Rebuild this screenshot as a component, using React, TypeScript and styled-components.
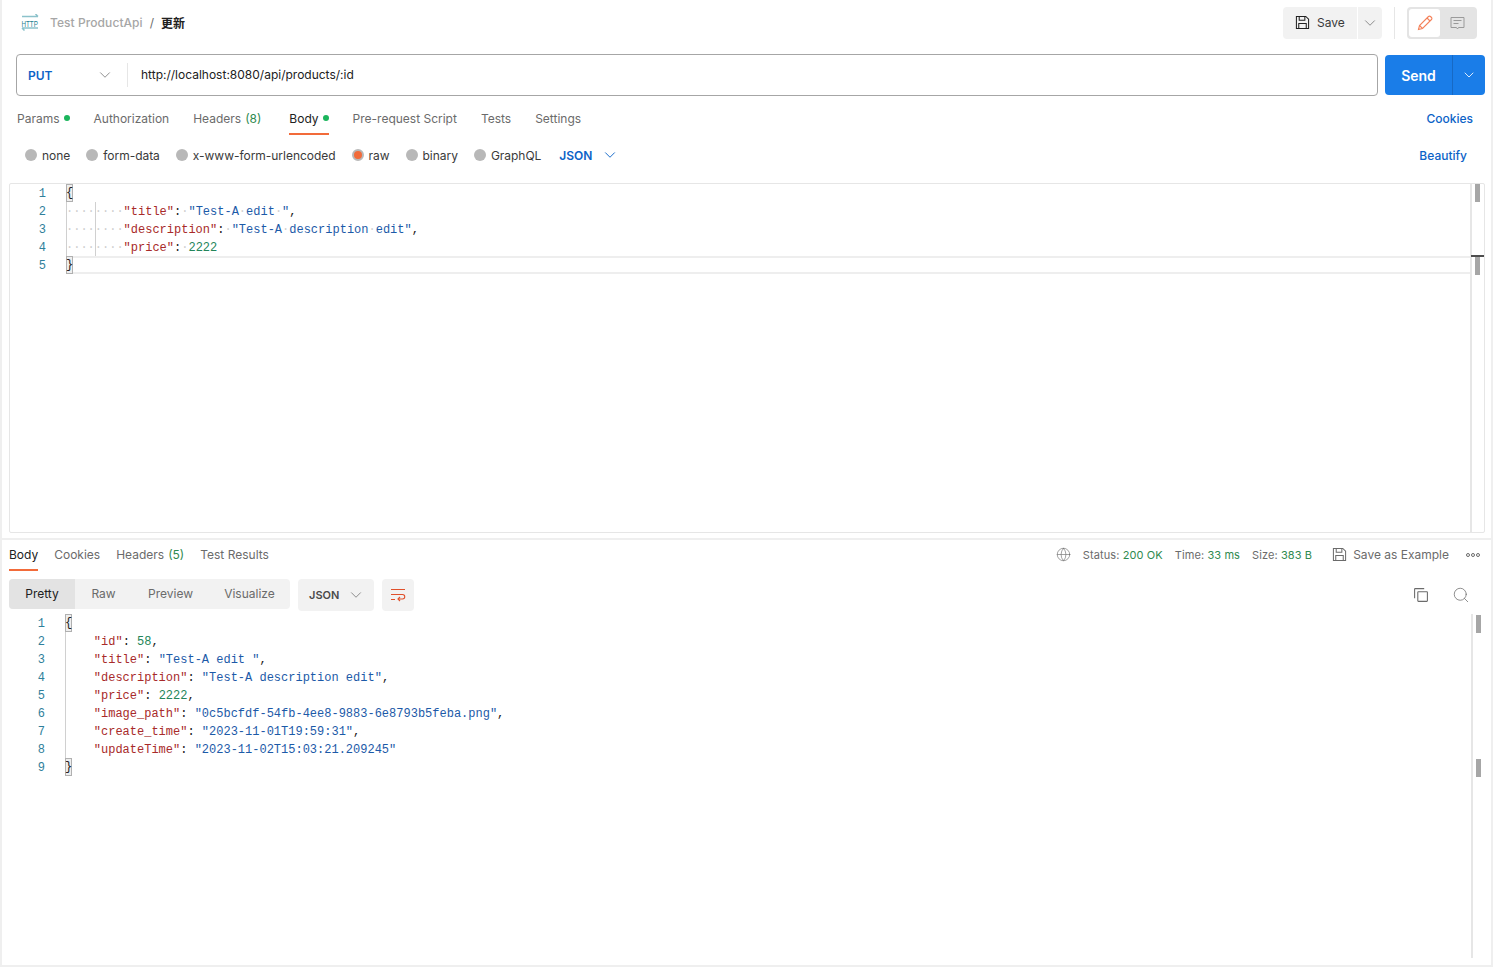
import styled, { createGlobalStyle } from 'styled-components'
import { ChevronDown, Globe, Search } from 'lucide-react'

const GlobalStyle = createGlobalStyle`
  html, body {
    margin: 0;
    padding: 0;
    background: #fff;
  }
  body {
    font-family: Inter, "Noto Sans CJK SC", "Liberation Sans", sans-serif;
    font-size: 12px;
    color: #212121;
  }
`

const Page = styled.div`
  width: 1493px;
  height: 967px;
  box-sizing: border-box;
  border-left: 2px solid #efefef;
  border-right: 2px solid #efefef;
  border-bottom: 2px solid #efefef;
  display: flex;
  flex-direction: column;
  overflow: hidden;
`

/* top bar */
const TopBar = styled.header`
  height: 46px;
  flex: none;
  padding: 7px 14px 0 19px;
  box-sizing: border-box;
  display: flex;
  align-items: flex-start;
`

const Crumbs = styled.div`
  display: flex;
  align-items: center;
  height: 30px;
  flex: 1;
`

const CrumbParent = styled.span`
  margin-left: 11px;
  color: #a6a6a6;
  font-weight: 500;
  letter-spacing: 0.07px;
`

const CrumbSlash = styled.span`
  margin: 0 7px;
  color: #6b6b6b;
`

const CrumbCurrent = styled.span`
  font-weight: 700;
  color: #212121;
`

const SaveGroup = styled.div`
  display: flex;
  gap: 1px;
`

const SaveButton = styled.div`
  width: 74px;
  height: 32px;
  padding: 0 0 2px 12px;
  display: flex;
  align-items: center;
  gap: 7px;
  box-sizing: border-box;
  background: #f2f2f2;
  border-radius: 4px 0 0 4px;
  color: #3a3a3a;
`

const SaveCaret = styled.div`
  width: 24px;
  height: 32px;
  display: flex;
  align-items: center;
  justify-content: center;
  background: #f2f2f2;
  border-radius: 0 4px 4px 0;
  color: #6b6b6b;
`

const TopDivider = styled.div`
  width: 1px;
  height: 32px;
  margin: 0 12px;
  background: #e6e6e6;
`

const ModeSwitch = styled.div`
  width: 70px;
  height: 32px;
  padding: 2px;
  box-sizing: border-box;
  display: flex;
  background: #e4e4e4;
  border-radius: 4px;
`

const ModeItem = styled.div<{ $active?: boolean }>`
  width: 32px;
  height: 28px;
  display: flex;
  align-items: center;
  justify-content: center;
  background: ${(p) => (p.$active ? '#fff' : 'transparent')};
  border-radius: 3px;
  margin-right: 2px;
`

/* url row */
const UrlRow = styled.div`
  flex: none;
  height: 42px;
  margin: 8px 6px 0 14px;
  display: flex;
  gap: 7px;
`

const UrlBox = styled.div`
  flex: 1;
  display: flex;
  align-items: center;
  border: 1px solid #a6a6a6;
  border-radius: 4px;
  box-sizing: border-box;
`

const MethodSelect = styled.div`
  width: 111px;
  height: 24px;
  padding: 0 13px 0 11px;
  box-sizing: border-box;
  display: flex;
  align-items: center;
  justify-content: space-between;
  border-right: 1px solid #e6e6e6;
  color: #0c63c7;
  font-weight: 600;
  font-size: 12px;
  svg {
    color: #6b6b6b;
  }
`

const UrlText = styled.div`
  padding: 0 0 2px 13px;
  font-size: 12px;
  color: #212121;
`

const SendButton = styled.div`
  width: 100px;
  height: 40px;
  margin-top: 1px;
  display: flex;
  background: #1a7de8;
  border-radius: 4px;
  color: #fff;
`

const SendLabel = styled.div`
  width: 67px;
  display: flex;
  align-items: center;
  justify-content: center;
  font-size: 14px;
  font-weight: 600;
  border-right: 1px solid #1769c4;
`

const SendCaret = styled.div`
  flex: 1;
  display: flex;
  align-items: center;
  justify-content: center;
`

/* tabs */
const TabRow = styled.nav`
  flex: none;
  height: 39px;
  padding-left: 15px;
  display: flex;
  gap: 24px;
`

const Tabs = styled.div`
  display: flex;
  gap: inherit;
  flex: 1;
`

const Tab = styled.div<{ $active?: boolean }>`
  display: flex;
  align-items: center;
  gap: 4px;
  height: 100%;
  box-sizing: border-box;
  color: ${(p) => (p.$active ? '#212121' : '#6b6b6b')};
  border-bottom: 2px solid ${(p) => (p.$active ? '#f26b3a' : 'transparent')};
`

const RequestTab = styled(Tab)`
  padding-top: 7px;
`

const TabDot = styled.span`
  width: 6px;
  height: 6px;
  border-radius: 50%;
  background: #1bb55c;
`

const Count = styled.span`
  color: #2f8a50;
`

const RequestCount = styled(Count)`
  margin-right: 4px;
`

const LinkAction = styled.div<{ $right: number; $top: number }>`
  margin-right: ${(p) => p.$right}px;
  padding-top: ${(p) => p.$top}px;
  color: #0c63c7;
  font-weight: 500;
  display: flex;
  align-items: center;
`

/* body types */
const BodyTypes = styled.div`
  flex: none;
  height: 40px;
  margin-bottom: 8px;
  padding: 0 24px 0 23px;
  display: flex;
  align-items: center;
  gap: 16px;
`

const RadioOption = styled.div`
  display: flex;
  align-items: center;
  gap: 5px;
  color: #3a3a3a;
  letter-spacing: -0.03px;
`

const Radio = styled.span<{ $checked?: boolean }>`
  width: 12px;
  height: 12px;
  border-radius: 50%;
  background: ${(p) => (p.$checked ? '#f26b3a' : '#b8b8b8')};
  box-sizing: border-box;
  border: ${(p) => (p.$checked ? '2.5px solid #b8b8b8' : 'none')};
`

const LangPicker = styled.div`
  display: flex;
  align-items: center;
  gap: 9px;
  margin-left: 2px;
  color: #0c63c7;
  font-weight: 600;
  flex: 1;
`

/* code editors */
const RequestEditor = styled.section`
  flex: none;
  height: 350px;
  margin: 0 6px 0 7px;
  box-sizing: border-box;
  border: 1px solid #e6e6e6;
  border-radius: 2px;
  display: flex;
  position: relative;
`

const ResponseEditor = styled.section`
  flex: none;
  height: 344px;
  margin: 3px 6px 0 0;
  display: flex;
  position: relative;
`

const Gutter = styled.div<{ $width: number }>`
  flex: none;
  width: ${(p) => p.$width}px;
  box-sizing: border-box;
  padding-right: 20px;
  text-align: right;
  font-family: "Liberation Mono", "DejaVu Sans Mono", monospace;
  font-size: 12px;
  color: #2f7f9b;
`

const GutterNumber = styled.div`
  height: 18px;
  line-height: 20px;
`

const CodeArea = styled.div`
  flex: 1;
  position: relative;
  font-family: "Liberation Mono", "DejaVu Sans Mono", monospace;
  font-size: 12px;
  white-space: pre;
  color: #212121;
`

const CodeLine = styled.div<{ $current?: boolean }>`
  height: 18px;
  line-height: 20px;
  box-sizing: border-box;
  ${(p) => p.$current && 'box-shadow: inset 0 2px 0 #eee, inset 0 -2px 0 #eee;'}
`

const Token = styled.span<{ $kind: TokenKind }>`
  color: ${(p) =>
    ({ key: '#a82a2a', str: '#1c5aa8', num: '#23855a', punct: '#212121', ws: '#cfcfcf' })[p.$kind]};
`

const Bracket = styled.span`
  display: inline-block;
  vertical-align: top;
  width: 7px;
  height: 18px;
  line-height: 18px;
  background: #eeeeee;
  box-shadow: inset 0 0 0 1px #b0b0b0;
  text-align: center;
`

const BracketRail = styled.div<{ $height: number }>`
  position: absolute;
  left: 0;
  top: 18px;
  height: ${(p) => p.$height}px;
  width: 1px;
  background: #d0d0d0;
`

const IndentGuide = styled.div`
  position: absolute;
  left: 29px;
  top: 18px;
  height: 54px;
  width: 1px;
  background: #d0d0d0;
`

const Ruler = styled.div`
  flex: none;
  width: 14px;
  border-left: 2px solid #e6e6e6;
  box-sizing: border-box;
  position: relative;
`

const RulerMark = styled.div<{ $top: number }>`
  position: absolute;
  left: 3px;
  top: ${(p) => p.$top}px;
  width: 5px;
  height: 18px;
  background: #a6a6a6;
`

const RulerLine = styled.div<{ $top: number }>`
  position: absolute;
  left: -1px;
  right: 0;
  top: ${(p) => p.$top}px;
  height: 2px;
  background: #4d4d4d;
`

/* response */
const SectionDivider = styled.div`
  flex: none;
  height: 2px;
  margin-top: 5px;
  background: #efefef;
`

const ResponseHead = styled.div`
  flex: none;
  height: 31px;
  padding-left: 7px;
  display: flex;
  gap: 16px;
`

const ResponseMeta = styled.div`
  display: flex;
  align-items: center;
  padding: 0 11px 2px 0;
  color: #6b6b6b;
  font-size: 11px;
  letter-spacing: 0.1px;
  margin-left: auto;
`

const MetaItem = styled.span`
  margin-left: 12px;
`

const MetaValue = styled.span`
  color: #2f8a50;
`

const SaveExample = styled.span`
  display: flex;
  align-items: center;
  gap: 6px;
  margin-left: 20px;
  font-size: 12px;
  letter-spacing: 0;
`

const MoreDots = styled.span`
  display: flex;
  gap: 1px;
  margin-left: 17px;
`

const MoreDot = styled.i`
  width: 4px;
  height: 4px;
  box-sizing: border-box;
  border: 1px solid #6b6b6b;
  border-radius: 50%;
`

const ResponseToolbar = styled.div`
  flex: none;
  height: 32px;
  margin-top: 8px;
  padding: 0 21px 0 7px;
  display: flex;
  gap: 8px;
  align-items: flex-start;
`

const Segments = styled.div`
  width: 281px;
  height: 30px;
  display: flex;
  background: #f2f2f2;
  border-radius: 4px;
  overflow: hidden;
`

const Segment = styled.div<{ $width: number; $active?: boolean }>`
  width: ${(p) => p.$width}px;
  padding-bottom: 2px;
  box-sizing: border-box;
  display: flex;
  align-items: center;
  justify-content: center;
  background: ${(p) => (p.$active ? '#e3e3e3' : 'transparent')};
  color: ${(p) => (p.$active ? '#212121' : '#6b6b6b')};
`

const FormatSelect = styled.div`
  width: 76px;
  height: 32px;
  padding: 0 9px 0 11px;
  box-sizing: border-box;
  display: flex;
  align-items: center;
  justify-content: space-between;
  background: #f2f2f2;
  border-radius: 4px;
  color: #4a4a4a;
  font-size: 11px;
  font-weight: 600;
  svg {
    color: #6b6b6b;
  }
`

const WrapButton = styled.div`
  width: 32px;
  height: 32px;
  display: flex;
  align-items: center;
  justify-content: center;
  background: #f2f2f2;
  border-radius: 4px;
`

const ToolActions = styled.div`
  margin-left: auto;
  height: 32px;
  display: flex;
  align-items: center;
  gap: 23px;
  color: #6b6b6b;
`

type TokenKind = 'key' | 'str' | 'num' | 'punct' | 'ws'
type Piece = [TokenKind, string]

const requestLines: Piece[][] = [
  [['ws', '········'], ['key', '"title"'], ['punct', ':'], ['ws', '·'], ['str', '"Test-A'], ['ws', '·'], ['str', 'edit'], ['ws', '·'], ['str', '"'], ['punct', ',']],
  [['ws', '········'], ['key', '"description"'], ['punct', ':'], ['ws', '·'], ['str', '"Test-A'], ['ws', '·'], ['str', 'description'], ['ws', '·'], ['str', 'edit"'], ['punct', ',']],
  [['ws', '········'], ['key', '"price"'], ['punct', ':'], ['ws', '·'], ['num', '2222']],
]

const responseLines: [string, TokenKind, string, string][] = [
  ['"id"', 'num', '58', ','],
  ['"title"', 'str', '"Test-A edit "', ','],
  ['"description"', 'str', '"Test-A description edit"', ','],
  ['"price"', 'num', '2222', ','],
  ['"image_path"', 'str', '"0c5bcfdf-54fb-4ee8-9883-6e8793b5feba.png"', ','],
  ['"create_time"', 'str', '"2023-11-01T19:59:31"', ','],
  ['"updateTime"', 'str', '"2023-11-02T15:03:21.209245"', ''],
]

const HttpIcon = () => (
  <svg width="18" height="17" viewBox="0 0 18 17" fill="none">
    <path d="M1 2.500h16M14.500 0l2.500 2.500" stroke="#8cc2cb" strokeWidth="1.500" />
    <path d="M1 14h16M1 14l2.500 2.500" stroke="#8cc2cb" strokeWidth="1.500" />
    <text transform="translate(0.500 12.500) scale(0.66 1)" fontFamily="Liberation Sans, sans-serif" fontSize="9.500" fill="#1f7f90">
      HTTP
    </text>
  </svg>
)

const FloppyIcon = ({ size, color }: { size: number; color: string }) => (
  <svg width={size} height={size} viewBox="0 0 16 16" fill="none" stroke={color} strokeWidth="1.100">
    <path d="M1.500 1.500h10l3 3v10h-13z" />
    <path d="M4.500 1.500v4h6v-4M4 14.500v-5.500h8v5.500" />
  </svg>
)

const PencilIcon = () => (
  <svg width="16" height="16" viewBox="0 0 16 16" fill="none" stroke="#f4825a" strokeWidth="1.100">
    <path d="M1.500 14.500l1-4L11.500 1.500a1.400 1.400 0 0 1 2 0l1 1a1.400 1.400 0 0 1 0 2L5.500 13.500z" />
    <path d="M2.500 10.500l3 3M10 3l3 3" />
  </svg>
)

const CommentIcon = () => (
  <svg width="15" height="15" viewBox="0 0 15 15" fill="none" stroke="#9a9a9a" strokeWidth="1">
    <path d="M1 1.500h13v10H8.500L7.500 13l-1-1.500H1z" />
    <path d="M3.500 4.500h8M3.500 7.500h5" />
  </svg>
)

const WrapIcon = () => (
  <svg width="16" height="14" viewBox="0 0 16 14" fill="none" stroke="#e0502b" strokeWidth="1.100">
    <path d="M1 1.500h14M1 6.500h11.500a2.200 2.200 0 0 1 0 4.500H8M1 11.500h4" />
    <path d="M10 9l-2 2 2 2" />
  </svg>
)

const CopyIcon = () => (
  <svg width="16" height="16" viewBox="0 0 15 15" fill="none" stroke="#6b6b6b" strokeWidth="1">
    <rect x="4.500" y="4.500" width="9" height="9" rx="0.500" />
    <path d="M10.500 1.500H2a.5.5 0 0 0-.5.5v8.500" />
  </svg>
)

const App: React.FC = () => {
  return (
    <>
      <GlobalStyle />
      <Page>
        <TopBar>
          <Crumbs>
            <HttpIcon />
            <CrumbParent>Test ProductApi</CrumbParent>
            <CrumbSlash>/</CrumbSlash>
            <CrumbCurrent>更新</CrumbCurrent>
          </Crumbs>
          <SaveGroup>
            <SaveButton>
              <FloppyIcon size={15} color="#212121" />
              Save
            </SaveButton>
            <SaveCaret>
              <ChevronDown size={18} strokeWidth={1} />
            </SaveCaret>
          </SaveGroup>
          <TopDivider />
          <ModeSwitch>
            <ModeItem $active>
              <PencilIcon />
            </ModeItem>
            <ModeItem>
              <CommentIcon />
            </ModeItem>
          </ModeSwitch>
        </TopBar>

        <UrlRow>
          <UrlBox>
            <MethodSelect>
              PUT
              <ChevronDown size={18} strokeWidth={1} />
            </MethodSelect>
            <UrlText>http://localhost:8080/api/products/:id</UrlText>
          </UrlBox>
          <SendButton>
            <SendLabel>Send</SendLabel>
            <SendCaret>
              <ChevronDown size={16} strokeWidth={1.25} />
            </SendCaret>
          </SendButton>
        </UrlRow>

        <TabRow>
          <Tabs>
            <RequestTab>Params <TabDot /></RequestTab>
            <RequestTab>Authorization</RequestTab>
            <RequestTab>Headers <RequestCount>(8)</RequestCount></RequestTab>
            <RequestTab $active>Body <TabDot /></RequestTab>
            <RequestTab>Pre-request Script</RequestTab>
            <RequestTab>Tests</RequestTab>
            <RequestTab>Settings</RequestTab>
          </Tabs>
          <LinkAction $right={18} $top={6}>Cookies</LinkAction>
        </TabRow>

        <BodyTypes>
          <RadioOption><Radio />none</RadioOption>
          <RadioOption><Radio />form-data</RadioOption>
          <RadioOption><Radio />x-www-form-urlencoded</RadioOption>
          <RadioOption><Radio $checked />raw</RadioOption>
          <RadioOption><Radio />binary</RadioOption>
          <RadioOption><Radio />GraphQL</RadioOption>
          <LangPicker>
            JSON
            <ChevronDown size={18} strokeWidth={1.25} />
          </LangPicker>
          <LinkAction $right={0} $top={0}>Beautify</LinkAction>
        </BodyTypes>

        <RequestEditor>
          <Gutter $width={56}>
            {[1, 2, 3, 4, 5].map((n) => (
              <GutterNumber key={n}>{n}</GutterNumber>
            ))}
          </Gutter>
          <CodeArea>
            <BracketRail $height={54} />
            <IndentGuide />
            <CodeLine><Bracket>{'{'}</Bracket></CodeLine>
            {requestLines.map((line, i) => (
              <CodeLine key={i}>
                {line.map(([kind, text], j) => (
                  <Token key={j} $kind={kind}>{text}</Token>
                ))}
              </CodeLine>
            ))}
            <CodeLine $current><Bracket>{'}'}</Bracket></CodeLine>
          </CodeArea>
          <Ruler>
            <RulerMark $top={0} />
            <RulerLine $top={71} />
            <RulerMark $top={73} />
          </Ruler>
        </RequestEditor>

        <SectionDivider />

        <ResponseHead>
          <Tab $active>Body</Tab>
          <Tab>Cookies</Tab>
          <Tab>Headers <Count>(5)</Count></Tab>
          <Tab>Test Results</Tab>
          <ResponseMeta>
            <Globe size={15} strokeWidth={1} />
            <MetaItem>Status: <MetaValue>200 OK</MetaValue></MetaItem>
            <MetaItem>Time: <MetaValue>33 ms</MetaValue></MetaItem>
            <MetaItem>Size: <MetaValue>383 B</MetaValue></MetaItem>
            <SaveExample>
              <FloppyIcon size={15} color="#6b6b6b" />
              Save as Example
            </SaveExample>
            <MoreDots>
              <MoreDot />
              <MoreDot />
              <MoreDot />
            </MoreDots>
          </ResponseMeta>
        </ResponseHead>

        <ResponseToolbar>
          <Segments>
            <Segment $width={66} $active>Pretty</Segment>
            <Segment $width={57}>Raw</Segment>
            <Segment $width={77}>Preview</Segment>
            <Segment $width={81}>Visualize</Segment>
          </Segments>
          <FormatSelect>
            JSON
            <ChevronDown size={18} strokeWidth={1} />
          </FormatSelect>
          <WrapButton>
            <WrapIcon />
          </WrapButton>
          <ToolActions>
            <CopyIcon />
            <Search size={18} strokeWidth={1} />
          </ToolActions>
        </ResponseToolbar>

        <ResponseEditor>
          <Gutter $width={63}>
            {[1, 2, 3, 4, 5, 6, 7, 8, 9].map((n) => (
              <GutterNumber key={n}>{n}</GutterNumber>
            ))}
          </Gutter>
          <CodeArea>
            <BracketRail $height={126} />
            <CodeLine><Bracket>{'{'}</Bracket></CodeLine>
            {responseLines.map(([key, kind, value, tail]) => (
              <CodeLine key={key}>
                {'    '}
                <Token $kind="key">{key}</Token>
                <Token $kind="punct">: </Token>
                <Token $kind={kind}>{value}</Token>
                <Token $kind="punct">{tail}</Token>
              </CodeLine>
            ))}
            <CodeLine><Bracket>{'}'}</Bracket></CodeLine>
          </CodeArea>
          <Ruler>
            <RulerMark $top={1} />
            <RulerMark $top={145} />
          </Ruler>
        </ResponseEditor>
      </Page>
    </>
  )
}

export default App
